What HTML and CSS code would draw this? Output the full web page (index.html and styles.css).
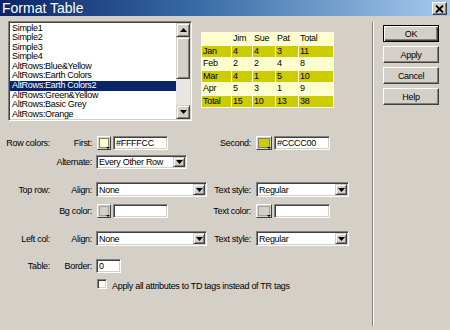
FILE: index.html
```html
<!DOCTYPE html>
<html>
<head>
<meta charset="utf-8">
<link rel="stylesheet" href="styles.css">
</head>
<body>
<div class="window">
  <div class="titlebar">
    <span class="title">Format Table</span>
    <span class="close"><svg width="9" height="8" viewBox="0 0 9 8"><path d="M1 0.5 L8 7.5 M8 0.5 L1 7.5" stroke="#000" stroke-width="1.8"/></svg></span>
  </div>
  <div class="body">
    <div class="main">
      <div class="top">
        <div class="listbox">
          <ul class="items">
            <li>Simple1</li>
            <li>Simple2</li>
            <li>Simple3</li>
            <li>Simple4</li>
            <li>AltRows:Blue&amp;Yellow</li>
            <li>AltRows:Earth Colors</li>
            <li class="sel">AltRows:Earth Colors2</li>
            <li>AltRows:Green&amp;Yellow</li>
            <li>AltRows:Basic Grey</li>
            <li>AltRows:Orange</li>
          </ul>
          <div class="scrollbar">
            <div class="sbtn"><svg width="7" height="4" viewBox="0 0 7 4"><path d="M0 4 L3.5 0 L7 4 Z" fill="#000"/></svg></div>
            <div class="thumb"></div>
            <div class="track"></div>
            <div class="sbtn"><svg width="7" height="4" viewBox="0 0 7 4"><path d="M0 0 L3.5 4 L7 0 Z" fill="#000"/></svg></div>
          </div>
        </div>
        <table class="preview">
          <tr class="light"><td class="w1"></td><td class="w2">Jim</td><td class="w3">Sue</td><td class="w4">Pat</td><td class="w5">Total</td></tr>
          <tr class="dark"><td>Jan</td><td>4</td><td>4</td><td>3</td><td>11</td></tr>
          <tr class="light"><td>Feb</td><td>2</td><td>2</td><td>4</td><td>8</td></tr>
          <tr class="dark"><td>Mar</td><td>4</td><td>1</td><td>5</td><td>10</td></tr>
          <tr class="light"><td>Apr</td><td>5</td><td>3</td><td>1</td><td>9</td></tr>
          <tr class="dark"><td>Total</td><td>15</td><td>10</td><td>13</td><td>38</td></tr>
        </table>
      </div>
      <div class="form">
        <div class="row r-colors">
          <div class="c1">Row colors:</div>
          <div class="c2">First:</div>
          <div class="c3">
            <span class="swatch sw-first"><span class="sw-fill yellow1"></span><span class="sw-arrow"></span></span>
            <span class="field f-hex">#FFFFCC</span>
          </div>
          <div class="c4">Second:</div>
          <div class="c5">
            <span class="swatch sw-second"><span class="sw-fill yellow2"></span><span class="sw-arrow"></span></span>
            <span class="field f-hex2">#CCCC00</span>
          </div>
        </div>
        <div class="row r-alt">
          <div class="c1"></div>
          <div class="c2">Alternate:</div>
          <div class="c3">
            <span class="combo cb-alt"><span class="cb-text">Every Other Row</span><span class="cb-btn"><svg width="7" height="4" viewBox="0 0 7 4"><path d="M0 0 L3.5 4 L7 0 Z" fill="#000"/></svg></span></span>
          </div>
        </div>
        <div class="row r-top">
          <div class="c1">Top row:</div>
          <div class="c2">Align:</div>
          <div class="c3">
            <span class="combo cb-align"><span class="cb-text">None</span><span class="cb-btn"><svg width="7" height="4" viewBox="0 0 7 4"><path d="M0 0 L3.5 4 L7 0 Z" fill="#000"/></svg></span></span>
          </div>
          <div class="c4">Text style:</div>
          <div class="c5">
            <span class="combo cb-style"><span class="cb-text">Regular</span><span class="cb-btn"><svg width="7" height="4" viewBox="0 0 7 4"><path d="M0 0 L3.5 4 L7 0 Z" fill="#000"/></svg></span></span>
          </div>
        </div>
        <div class="row r-bg">
          <div class="c1"></div>
          <div class="c2">Bg color:</div>
          <div class="c3">
            <span class="swatch sw-first"><span class="sw-fill grey"></span><span class="sw-arrow"></span></span>
            <span class="field f-hex"></span>
          </div>
          <div class="c4">Text color:</div>
          <div class="c5">
            <span class="swatch sw-second"><span class="sw-fill grey"></span><span class="sw-arrow"></span></span>
            <span class="field f-hex2"></span>
          </div>
        </div>
        <div class="row r-left">
          <div class="c1">Left col:</div>
          <div class="c2">Align:</div>
          <div class="c3">
            <span class="combo cb-align"><span class="cb-text">None</span><span class="cb-btn"><svg width="7" height="4" viewBox="0 0 7 4"><path d="M0 0 L3.5 4 L7 0 Z" fill="#000"/></svg></span></span>
          </div>
          <div class="c4">Text style:</div>
          <div class="c5">
            <span class="combo cb-style"><span class="cb-text">Regular</span><span class="cb-btn"><svg width="7" height="4" viewBox="0 0 7 4"><path d="M0 0 L3.5 4 L7 0 Z" fill="#000"/></svg></span></span>
          </div>
        </div>
        <div class="row r-table">
          <div class="c1">Table:</div>
          <div class="c2">Border:</div>
          <div class="c3">
            <span class="field f-border">0</span>
          </div>
        </div>
        <div class="row r-check">
          <span class="checkbox"></span>
          <span class="check-label">Apply all attributes to TD tags instead of TR tags</span>
        </div>
      </div>
    </div>
    <div class="sep"></div>
    <div class="buttons">
      <div class="btn default"><span>OK</span></div>
      <div class="btn"><span>Apply</span></div>
      <div class="btn"><span>Cancel</span></div>
      <div class="btn"><span>Help</span></div>
    </div>
  </div>
</div>
</body>
</html>
```
FILE: styles.css
```css
* { box-sizing: border-box; }
html, body {
  margin: 0;
  padding: 0;
  background: #d4d0c8;
}
body {
  width: 450px;
  height: 330px;
  overflow: hidden;
  font-family: "Liberation Sans", Arial, sans-serif;
  font-size: 9px;
  letter-spacing: -0.3px;
  color: #000;
}
.window {
  width: 450px;
  height: 330px;
}
.titlebar {
  height: 16px;
  background: linear-gradient(to right, #0a246a 0%, #3a6ea5 45%, #a6caf0 100%);
  display: flex;
  align-items: center;
  justify-content: space-between;
  padding: 0 3px 0 2px;
}
.title {
  color: #fff;
  font-size: 14px;
  letter-spacing: 0;
  line-height: 16px;
}
.close {
  width: 15px;
  height: 13px;
  margin-top: 1px;
  background: #d4d0c8;
  border-top: 1px solid #fff;
  border-left: 1px solid #fff;
  border-right: 1px solid #404040;
  border-bottom: 1px solid #404040;
  box-shadow: inset -1px -1px 0 #808080;
  display: flex;
  align-items: center;
  justify-content: center;
}
.body {
  display: flex;
  height: 314px;
}
.main {
  width: 372px;
}
.top {
  display: flex;
  align-items: flex-start;
  padding: 5px 0 0 8px;
}
.listbox {
  width: 184px;
  height: 100px;
  display: flex;
  background: #fff;
  border-top: 1px solid #808080;
  border-left: 1px solid #808080;
  border-right: 1px solid #fff;
  border-bottom: 1px solid #fff;
  box-shadow: inset 1px 1px 0 #404040, inset -1px -1px 0 #d4d0c8;
  padding: 1px;
}
.items {
  list-style: none;
  margin: 0;
  padding: 0.5px 0 0 0;
  flex: 1;
  overflow: hidden;
}
.items li {
  height: 9.6px;
  line-height: 9.6px;
  padding-left: 2px;
  white-space: nowrap;
}
.items li.sel {
  background: #0a246a;
  color: #fff;
}
.scrollbar {
  width: 14px;
  display: flex;
  flex-direction: column;
}
.sbtn {
  height: 14px;
  background: #d4d0c8;
  border-top: 1px solid #d4d0c8;
  border-left: 1px solid #d4d0c8;
  border-right: 1px solid #404040;
  border-bottom: 1px solid #404040;
  box-shadow: inset 1px 1px 0 #fff, inset -1px -1px 0 #808080;
  display: flex;
  align-items: center;
  justify-content: center;
}
.thumb {
  height: 42px;
  background: #d4d0c8;
  border-top: 1px solid #d4d0c8;
  border-left: 1px solid #d4d0c8;
  border-right: 1px solid #404040;
  border-bottom: 1px solid #404040;
  box-shadow: inset 1px 1px 0 #fff, inset -1px -1px 0 #808080;
}
.track {
  flex: 1;
  background: #e8e6e2;
}
.preview {
  margin: 11px 0 0 9px;
  border-collapse: separate;
  border-spacing: 1px;
  background: #fbfbe8;
}
.preview td {
  height: 11.5px;
  padding: 0 0 0 1px;
  line-height: 11px;
  vertical-align: middle;
}
.preview .w1 { width: 29px; }
.preview .w2 { width: 20px; }
.preview .w3 { width: 22px; }
.preview .w4 { width: 22px; }
.preview .w5 { width: 34px; }
.preview tr.light td { background: #ffffcc; }
.preview tr.dark td { background: #cccc00; }

.form {
  margin-top: 15px;
}
.row {
  display: flex;
  align-items: center;
  height: 14px;
}
.r-alt { margin-top: 5px; }
.r-top { margin-top: 13px; height: 15px; }
.r-bg { margin-top: 7px; }
.r-left { margin-top: 13px; height: 15px; }
.r-table { margin-top: 13px; }
.r-check { margin-top: 6px; height: 10px; }

.c1 { width: 50px; text-align: right; white-space: nowrap; }
.c2 { width: 42px; text-align: right; white-space: nowrap; }
.c3 { width: 111px; margin-left: 4px; display: flex; align-items: center; }
.c4 { width: 44px; text-align: right; white-space: nowrap; }
.c5 { margin-left: 5px; display: flex; align-items: center; }

.swatch {
  position: relative;
  height: 14px;
  display: block;
  border-top: 1px solid #fff;
  border-left: 1px solid #fff;
  border-right: 1px solid #404040;
  border-bottom: 1px solid #404040;
  padding: 1px;
  background: #d4d0c8;
}
.sw-first { width: 14px; margin-left: 1px; }
.sw-second { width: 16px; }
.sw-fill {
  display: block;
  width: 100%;
  height: 100%;
  border: 1px solid #808080;
}
.sw-fill.yellow1 { background: #ffffcc; }
.sw-fill.yellow2 { background: #cccc00; }
.sw-fill.grey { background: #d4d0c8; border-color: #a0a0a0; }
.sw-arrow {
  position: absolute;
  right: 0;
  bottom: 0;
  width: 0;
  height: 0;
  border-left: 2px solid transparent;
  border-right: 2px solid transparent;
  border-top: 2px solid #000;
}
.field {
  display: block;
  height: 14px;
  background: #fff;
  border-top: 1px solid #808080;
  border-left: 1px solid #808080;
  border-right: 1px solid #fff;
  border-bottom: 1px solid #fff;
  box-shadow: inset 1px 1px 0 #404040, inset -1px -1px 0 #d4d0c8;
  padding: 0 2px;
  line-height: 12px;
  white-space: nowrap;
}
.f-hex { width: 55px; margin-left: 2px; }
.f-hex2 { width: 56px; margin-left: 2px; }
.f-border { width: 25px; }

.combo {
  display: flex;
  align-items: center;
  height: 100%;
  background: #fff;
  border-top: 1px solid #808080;
  border-left: 1px solid #808080;
  border-right: 1px solid #fff;
  border-bottom: 1px solid #fff;
  box-shadow: inset 1px 1px 0 #404040, inset -1px -1px 0 #d4d0c8;
  padding: 1px;
}
.r-alt .combo { height: 14px; }
.r-top .combo, .r-left .combo { height: 15px; }
.cb-alt { width: 91px; }
.cb-align { width: 111px; }
.cb-style { width: 93px; }
.cb-text {
  flex: 1;
  padding-left: 1px;
  white-space: nowrap;
  overflow: hidden;
}
.cb-btn {
  width: 12px;
  height: 100%;
  background: #d4d0c8;
  border-top: 1px solid #d4d0c8;
  border-left: 1px solid #d4d0c8;
  border-right: 1px solid #404040;
  border-bottom: 1px solid #404040;
  box-shadow: inset 1px 1px 0 #fff, inset -1px -1px 0 #808080;
  display: flex;
  align-items: center;
  justify-content: center;
}
.checkbox {
  display: block;
  width: 10px;
  height: 10px;
  margin-left: 97px;
  background: #fff;
  border-top: 1px solid #808080;
  border-left: 1px solid #808080;
  border-right: 1px solid #fff;
  border-bottom: 1px solid #fff;
  box-shadow: inset 1px 1px 0 #404040, inset -1px -1px 0 #d4d0c8;
}
.check-label {
  margin-left: 5px;
  white-space: nowrap;
  position: relative;
  top: 2px;
}

.sep {
  width: 2px;
  height: 304px;
  margin-top: 6px;
  border-left: 1px solid #808080;
  border-right: 1px solid #fff;
}
.buttons {
  margin-left: 9px;
  padding-top: 9px;
  display: flex;
  flex-direction: column;
  gap: 4px;
}
.btn {
  width: 56px;
  height: 17px;
  background: #d4d0c8;
  border-top: 1px solid #fff;
  border-left: 1px solid #fff;
  border-right: 1px solid #404040;
  border-bottom: 1px solid #404040;
  box-shadow: inset -1px -1px 0 #808080;
  display: flex;
  align-items: center;
  justify-content: center;
}
.btn.default {
  border: 1px solid #000;
  box-shadow: inset 1px 1px 0 #fff, inset -1px -1px 0 #404040, inset -2px -2px 0 #808080;
}
```
